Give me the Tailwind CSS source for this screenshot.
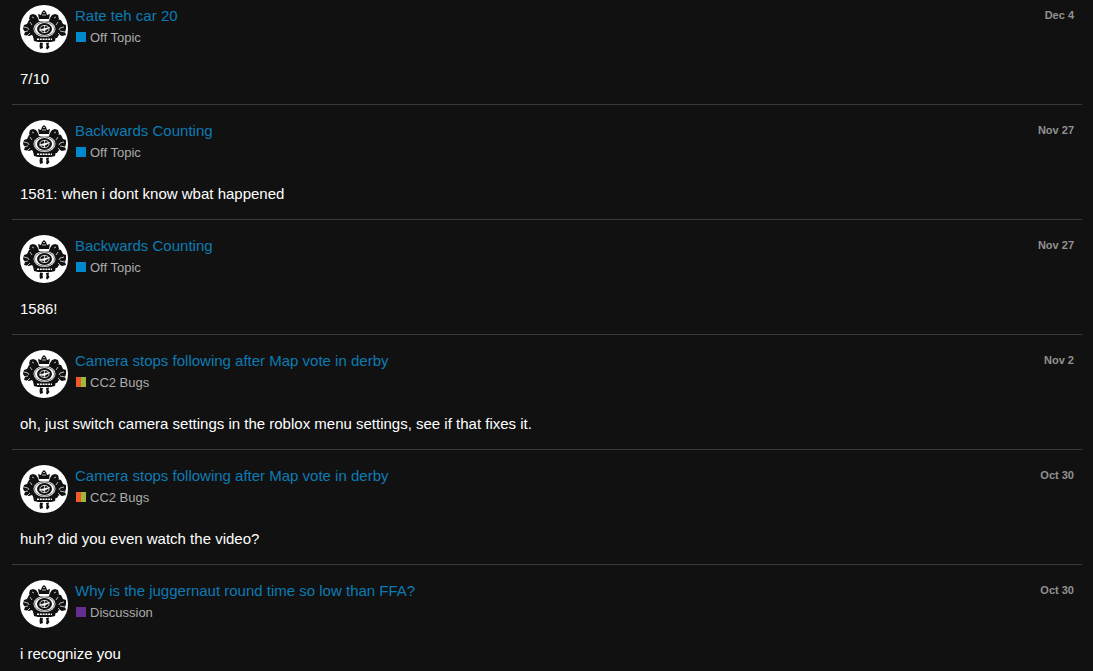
<!DOCTYPE html>
<html lang="en">
<head>
    <meta charset="UTF-8">
    <title>Activity</title>
    <script src="https://cdn.jsdelivr.net/npm/@tailwindcss/browser@4"></script>
</head>
<body class="bg-[#111111] font-['Liberation_Sans',Arial,sans-serif] overflow-hidden h-[671px]">
    <svg width="0" height="0" class="absolute">
        <symbol id="crest" viewBox="0 0 48 48">
            <circle cx="24" cy="24" r="24" fill="#fff"/>
            <!-- crown and side plumes -->
            <path d="M19 14l-1-5 3 1 1-3 2-2 2 2 1 3 3-1-1 5z" fill="#111"/>
            <path d="M9 14l1-4 3-1 3 1 2 3 1 3-5 1zM39 14l-1-4-3-1-3 1-2 3-1 3 5 1z" fill="#111"/>
            <!-- wings -->
            <path d="M11 14l5 2 16 0 5-2 4 1 2 4 3 1 0 4-1 3 1 3-4 1-3-1-2 3-3 0H17l-3 0-2-3-3 1-5-1 1-3-2-3 1-4 3-1 2-4z" fill="#111"/>
            <path d="M4 22l4 1 1 2M3 27l5-1M7 31l3-3M44 22l-4 1-1 2M45 27l-5-1M41 31l-3-3M10 17l2 3M38 17l-2 3M12 12l2 1M36 12l-2 1M22 10h4M23 7.500h2" stroke="#fff" stroke-width="0.700" fill="none"/>
            <!-- centre oval -->
            <ellipse cx="24.500" cy="24" rx="11" ry="8" fill="#fff"/>
            <ellipse cx="24.500" cy="24" rx="10" ry="7" fill="none" stroke="#111" stroke-width="0.600"/>
            <ellipse cx="24.500" cy="24" rx="7.500" ry="6" fill="#111"/>
            <ellipse cx="24.500" cy="24" rx="4.500" ry="3.500" fill="none" stroke="#fff" stroke-width="0.800"/>
            <path d="M19.500 25l5-1.500 5-1-5 3zM24.500 20v8" stroke="#fff" stroke-width="0.700" fill="#fff"/>
            <!-- banner -->
            <path d="M13 31l3 1h17l3-1-1 5-4 1H18l-4-1z" fill="#111"/>
            <path d="M17 34.300h15" stroke="#fff" stroke-width="1.400" stroke-dasharray="2 0.800"/>
            <!-- lower marks -->
            <path d="M20 37.500l3 .5-.5 2 .5 3-3 1-.5-3zM26 38l3-.5-.5 2.500 1 2-2 2.500-1.500-1 .5-3z" fill="#111"/>
        </symbol>
    </svg>

    <ul class="pl-3 pr-[11px] -mt-[10px]">
        <li class="border-b border-[#3a3a3a] h-[115px] px-2 pt-[15px]">
            <div class="flex">
                <svg class="w-12 h-12 shrink-0"><use href="#crest"/></svg>
                <div class="ml-[7px] flex-1 pt-px">
                    <a class="block text-[15px] leading-[20px] text-[#0d7bb3]">Rate teh car 20</a>
                    <div class="flex items-center mt-[3px] pl-px text-[13px] leading-[18px] text-[#ababab]">
                        <span class="w-[10px] h-[10px] mr-[4px] mb-[2px] bg-[#0088cc]"></span>Off Topic
                    </div>
                </div>
                <span class="mt-px text-[11px] leading-[18px] font-bold text-[#919191]">Dec 4</span>
            </div>
            <p class="mt-4 text-[15px] leading-[20px] text-white">7/10</p>
        </li>
        <li class="border-b border-[#3a3a3a] h-[115px] px-2 pt-[15px]">
            <div class="flex">
                <svg class="w-12 h-12 shrink-0"><use href="#crest"/></svg>
                <div class="ml-[7px] flex-1 pt-px">
                    <a class="block text-[15px] leading-[20px] text-[#0d7bb3]">Backwards Counting</a>
                    <div class="flex items-center mt-[3px] pl-px text-[13px] leading-[18px] text-[#ababab]">
                        <span class="w-[10px] h-[10px] mr-[4px] mb-[2px] bg-[#0088cc]"></span>Off Topic
                    </div>
                </div>
                <span class="mt-px text-[11px] leading-[18px] font-bold text-[#919191]">Nov 27</span>
            </div>
            <p class="mt-4 text-[15px] leading-[20px] text-white">1581: when i dont know wbat happened</p>
        </li>
        <li class="border-b border-[#3a3a3a] h-[115px] px-2 pt-[15px]">
            <div class="flex">
                <svg class="w-12 h-12 shrink-0"><use href="#crest"/></svg>
                <div class="ml-[7px] flex-1 pt-px">
                    <a class="block text-[15px] leading-[20px] text-[#0d7bb3]">Backwards Counting</a>
                    <div class="flex items-center mt-[3px] pl-px text-[13px] leading-[18px] text-[#ababab]">
                        <span class="w-[10px] h-[10px] mr-[4px] mb-[2px] bg-[#0088cc]"></span>Off Topic
                    </div>
                </div>
                <span class="mt-px text-[11px] leading-[18px] font-bold text-[#919191]">Nov 27</span>
            </div>
            <p class="mt-4 text-[15px] leading-[20px] text-white">1586!</p>
        </li>
        <li class="border-b border-[#3a3a3a] h-[115px] px-2 pt-[15px]">
            <div class="flex">
                <svg class="w-12 h-12 shrink-0"><use href="#crest"/></svg>
                <div class="ml-[7px] flex-1 pt-px">
                    <a class="block text-[15px] leading-[20px] text-[#0d7bb3]">Camera stops following after Map vote in derby</a>
                    <div class="flex items-center mt-[3px] pl-px text-[13px] leading-[18px] text-[#ababab]">
                        <span class="w-[5px] h-[10px] mb-[2px] bg-[#f1592a]"></span><span class="w-[5px] h-[10px] mr-[4px] mb-[2px] bg-[#9eb83b]"></span>CC2 Bugs
                    </div>
                </div>
                <span class="mt-px text-[11px] leading-[18px] font-bold text-[#919191]">Nov 2</span>
            </div>
            <p class="mt-4 text-[15px] leading-[20px] text-white">oh, just switch camera settings in the roblox menu settings, see if that fixes it.</p>
        </li>
        <li class="border-b border-[#3a3a3a] h-[115px] px-2 pt-[15px]">
            <div class="flex">
                <svg class="w-12 h-12 shrink-0"><use href="#crest"/></svg>
                <div class="ml-[7px] flex-1 pt-px">
                    <a class="block text-[15px] leading-[20px] text-[#0d7bb3]">Camera stops following after Map vote in derby</a>
                    <div class="flex items-center mt-[3px] pl-px text-[13px] leading-[18px] text-[#ababab]">
                        <span class="w-[5px] h-[10px] mb-[2px] bg-[#f1592a]"></span><span class="w-[5px] h-[10px] mr-[4px] mb-[2px] bg-[#9eb83b]"></span>CC2 Bugs
                    </div>
                </div>
                <span class="mt-px text-[11px] leading-[18px] font-bold text-[#919191]">Oct 30</span>
            </div>
            <p class="mt-4 text-[15px] leading-[20px] text-white">huh? did you even watch the video?</p>
        </li>
        <li class="h-[115px] px-2 pt-[15px]">
            <div class="flex">
                <svg class="w-12 h-12 shrink-0"><use href="#crest"/></svg>
                <div class="ml-[7px] flex-1 pt-px">
                    <a class="block text-[15px] leading-[20px] text-[#0d7bb3]">Why is the juggernaut round time so low than FFA?</a>
                    <div class="flex items-center mt-[3px] pl-px text-[13px] leading-[18px] text-[#ababab]">
                        <span class="w-[10px] h-[10px] mr-[4px] mb-[2px] bg-[#652d90]"></span>Discussion
                    </div>
                </div>
                <span class="mt-px text-[11px] leading-[18px] font-bold text-[#919191]">Oct 30</span>
            </div>
            <p class="mt-4 text-[15px] leading-[20px] text-white">i recognize you</p>
        </li>
    </ul>
</body>
</html>
